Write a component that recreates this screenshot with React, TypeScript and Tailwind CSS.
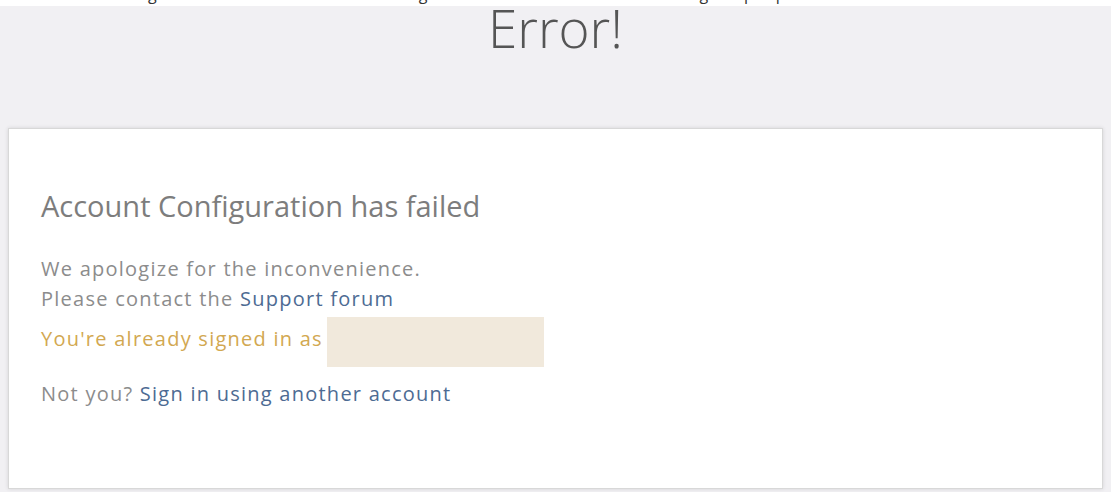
import React from 'react';

const font = { fontFamily: '"Open Sans", "Liberation Sans", sans-serif' };

// clipped descenders of a line of text above the viewport
const CutLine: React.FC = () => (
  <div className="h-[6px] bg-white overflow-hidden">
    <div className="-mt-[14px] flex text-[16px] leading-[16px] text-[#333]">
      <span className="ml-[148px]">g</span>
      <span className="ml-[262px]">g</span>
      <span className="ml-[272px]">g</span>
      <span className="ml-[36px]">p</span>
      <span className="ml-[22px]">p</span>
    </div>
  </div>
);

const App: React.FC = () => {
  return (
    <div className="w-[1111px] h-[492px] overflow-hidden bg-[#f1f0f3]" style={font}>
      <CutLine />
      <div className="px-[8px]">
        <h1 className="-mt-[5px] h-[127px] text-center text-[53px] leading-none font-light text-[#555]">
          Error!
        </h1>
        <div className="h-[361px] bg-white border border-[#d8d8d8] shadow-[0_0_4px_rgba(0,0,0,0.12)] pl-[32px] pt-[59px]">
          <h2 className="text-[29px] leading-[36px] text-[#7d7d7d]">Account Configuration has failed</h2>
          <div className="mt-[30px] text-[20px] leading-[30px] tracking-[1.25px] text-[#8c8c8c]">
            <p>We apologize for the inconvenience.</p>
            <p>
              Please contact the <a className="text-[#4d6b93]">Support forum</a>
            </p>
          </div>
          <div className="mt-[3px] flex items-start text-[20px] leading-[30px] tracking-[1.25px]">
            <span className="pt-[7px] text-[#d2a851]">You're already signed in as</span>
            <span className="ml-[4px] h-[50px] w-[217px] bg-[#f1e9dc]" />
          </div>
          <p className="mt-[12px] text-[20px] leading-[30px] tracking-[1.25px] text-[#8c8c8c]">
            Not you? <a className="text-[#4d6b93]">Sign in using another account</a>
          </p>
        </div>
      </div>
    </div>
  );
};

export default App;
